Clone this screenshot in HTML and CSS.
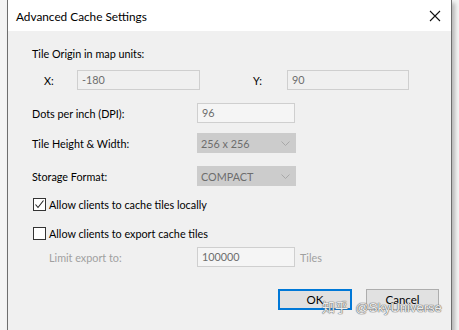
FILE: index.html
```html
<!DOCTYPE html>
<html lang="en">
<head>
  <meta charset="UTF-8">
  <title>Advanced Cache Settings</title>
  <link rel="stylesheet" href="styles.css">
</head>
<body>
  <div class="dialog">
    <div class="titlebar">
      <span class="title">Advanced Cache Settings</span>
      <svg class="close" width="12" height="12" viewBox="0 0 12 12">
        <path d="M1 1 L11 11 M11 1 L1 11" stroke="#111" stroke-width="1.1" fill="none"/>
      </svg>
    </div>

    <div class="content">
      <div class="row r-origin">Tile Origin in map units:</div>

      <div class="row r-xy">
        <span class="xy-label">X:</span>
        <div class="field field-x">-180</div>
        <span class="xy-label y-label">Y:</span>
        <div class="field field-y">90</div>
      </div>

      <div class="row r-dpi">
        <span class="label">Dots per inch (DPI):</span>
        <div class="field field-small">96</div>
      </div>

      <div class="row r-size">
        <span class="label">Tile Height &amp; Width:</span>
        <div class="select">256 x 256
          <svg class="chev" width="9" height="5" viewBox="0 0 9 5"><polyline points="0.5,0.5 4.5,4.5 8.5,0.5" fill="none" stroke="#a8a8a8" stroke-width="1"/></svg>
        </div>
      </div>

      <div class="row r-format">
        <span class="label">Storage Format:</span>
        <div class="select">COMPACT
          <svg class="chev" width="9" height="5" viewBox="0 0 9 5"><polyline points="0.5,0.5 4.5,4.5 8.5,0.5" fill="none" stroke="#a8a8a8" stroke-width="1"/></svg>
        </div>
      </div>

      <div class="row r-check1">
        <span class="checkbox">
          <svg width="11" height="11" viewBox="0 0 11 11"><polyline points="1.5,5.5 4,8.5 9.5,1.5" fill="none" stroke="#222" stroke-width="1.1"/></svg>
        </span>
        <span class="check-label">Allow clients to cache tiles locally</span>
      </div>

      <div class="row r-check2">
        <span class="checkbox"></span>
        <span class="check-label">Allow clients to export cache tiles</span>
      </div>

      <div class="row r-limit">
        <span class="label limit-label">Limit export to:</span>
        <div class="field field-small">100000</div>
        <span class="units">Tiles</span>
      </div>

      <div class="buttons">
        <div class="btn btn-default">OK</div>
        <div class="btn">Cancel</div>
      </div>
    </div>

    <div class="watermark">知乎 @SkyUniverse</div>
  </div>
</body>
</html>
```

FILE: styles.css
```css
body {
  margin: 0;
  background-color: #f4f4f4;
  font-family: Lato, "Open Sans", sans-serif;
  font-size: 10.8px;
  color: #000;
  overflow: hidden;
}
.dialog {
  position: relative;
  width: 443px;
  margin-left: 7px;
  border: 1px solid #6e6e6e;
  border-top: none;
  background-color: #f0f0f0;
  box-shadow: 3px 3px 4px rgba(0,0,0,0.25);
}
.titlebar {
  height: 31px;
  background-color: #fff;
  display: flex;
  align-items: center;
  justify-content: space-between;
  padding: 0 10px 0 8px;
}
.title {
  font-size: 11.8px;
  margin-top: 1px;
}
.close {
  display: block;
}
.content {
  padding: 0 12px 13px 24px;
  height: 278px;
}
.row {
  display: flex;
  align-items: center;
  height: 20px;
}
.r-origin { margin-top: 12px; }
.r-xy { margin-top: 7px; }
.r-dpi { margin-top: 13px; }
.r-size { margin-top: 10px; }
.r-format { margin-top: 13px; }
.r-check1 { margin-top: 8px; }
.r-check2 { margin-top: 9px; }
.r-limit { margin-top: 4px; }
.xy-label {
  width: 45px;
  padding-left: 12px;
  box-sizing: border-box;
}
.y-label {
  width: 87px;
  padding-left: 53px;
}
.label {
  width: 165px;
}
.limit-label {
  padding-left: 17px;
  box-sizing: border-box;
  color: #a0a0a0;
}
.field {
  box-sizing: border-box;
  height: 20px;
  border: 1px solid #cfcfcf;
  background-color: #f0f0f0;
  color: #6d6d6d;
  padding-left: 4px;
  line-height: 18px;
}
.field-x { width: 123px; }
.field-y { width: 122px; }
.field-small {
  width: 98px;
  background-color: #f5f5f5;
}
.select {
  box-sizing: border-box;
  width: 99px;
  height: 20px;
  background-color: #cccccc;
  border: 1px solid #cccccc;
  color: #6d6d6d;
  padding-left: 3px;
  display: flex;
  align-items: center;
  justify-content: space-between;
  padding-right: 5px;
}
.chev { display: block; }
.units {
  margin-left: 5px;
  color: #a0a0a0;
}
.checkbox {
  box-sizing: border-box;
  width: 13px;
  height: 13px;
  margin-left: 1px;
  border: 1px solid #333;
  background-color: #fff;
  display: flex;
  align-items: center;
  justify-content: center;
}
.check-label {
  margin-left: 3px;
}
.buttons {
  display: flex;
  justify-content: flex-end;
  gap: 14px;
  margin-top: 22px;
}
.btn {
  box-sizing: border-box;
  width: 73px;
  height: 21px;
  border: 1px solid #adadad;
  background-color: #e1e1e1;
  display: flex;
  align-items: center;
  justify-content: center;
  font-size: 11.5px;
}
.btn-default {
  width: 74px;
  border: 2px solid #0078d7;
}
.watermark {
  position: absolute;
  left: 314px;
  top: 297px;
  font-family: "Liberation Sans", "Noto Sans CJK SC", sans-serif;
  font-size: 13px;
  word-spacing: 4px;
  color: rgba(255,255,255,0.9);
  text-shadow: 0 0 1px #666, 0 0 1px #666, 0 0 1px #888;
  white-space: nowrap;
}
```
